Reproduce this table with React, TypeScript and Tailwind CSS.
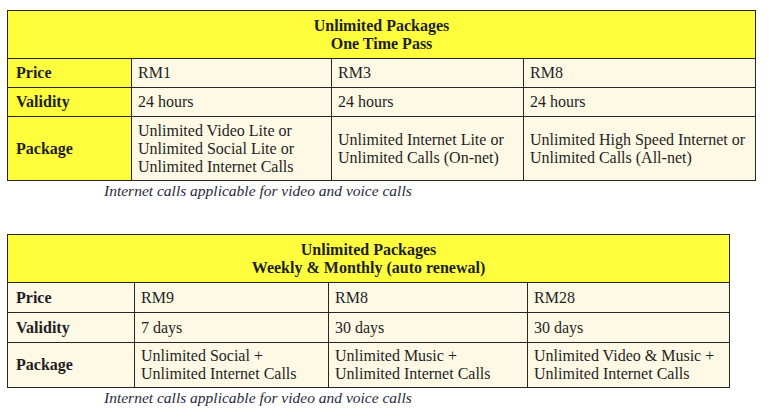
import React from 'react'

type Table = {
  title: string
  subtitle: string
  prices: string[]
  validity: string[]
  packages: string[][]
  cols: string[]
  labelBg: string
  width: string
}

const tables: Table[] = [
  {
    title: 'Unlimited Packages',
    subtitle: 'One Time Pass',
    prices: ['RM1', 'RM3', 'RM8'],
    validity: ['24 hours', '24 hours', '24 hours'],
    packages: [
      ['Unlimited Video Lite or', 'Unlimited Social Lite or', 'Unlimited Internet Calls'],
      ['Unlimited Internet Lite or', 'Unlimited Calls (On-net)'],
      ['Unlimited High Speed Internet or', 'Unlimited Calls (All-net)'],
    ],
    cols: ['w-[124px]', 'w-[200px]', 'w-[192px]', 'w-[232px]'],
    labelBg: 'bg-[#fffe3c]',
    width: 'w-[748px]',
  },
  {
    title: 'Unlimited Packages',
    subtitle: 'Weekly & Monthly (auto renewal)',
    prices: ['RM9', 'RM8', 'RM28'],
    validity: ['7 days', '30 days', '30 days'],
    packages: [
      ['Unlimited Social +', 'Unlimited Internet Calls'],
      ['Unlimited Music +', 'Unlimited Internet Calls'],
      ['Unlimited Video & Music +', 'Unlimited Internet Calls'],
    ],
    cols: ['w-[127px]', 'w-[194px]', 'w-[199px]', 'w-[202px]'],
    labelBg: 'bg-[#fef9e4]',
    width: 'w-[722px]',
  },
]

const cell = 'border-[1.5px] border-[#262626] px-[6px] text-left align-middle'

const PackageTable = ({ t, headerH, rowH, pkgH }: { t: Table; headerH: string; rowH: string; pkgH: string }) => (
  <table className={`${t.width} table-fixed border-collapse`}>
    <colgroup>
      {t.cols.map((c, i) => (
        <col key={i} className={c} />
      ))}
    </colgroup>
    <tbody>
      <tr className={headerH}>
        <td colSpan={4} className="border-[1.5px] border-[#262626] bg-[#fffe3c] text-center font-bold leading-[18px]">
          <div>{t.title}</div>
          <div>{t.subtitle}</div>
        </td>
      </tr>
      <tr className={rowH}>
        <td className={`${cell} ${t.labelBg} pl-[8px] font-bold`}>Price</td>
        {t.prices.map((p, i) => (
          <td key={i} className={`${cell} bg-[#fef9e4]`}>{p}</td>
        ))}
      </tr>
      <tr className={rowH}>
        <td className={`${cell} ${t.labelBg} pl-[8px] font-bold`}>Validity</td>
        {t.validity.map((p, i) => (
          <td key={i} className={`${cell} bg-[#fef9e4]`}>{p}</td>
        ))}
      </tr>
      <tr className={pkgH}>
        <td className={`${cell} ${t.labelBg} pl-[8px] font-bold`}>Package</td>
        {t.packages.map((lines, i) => (
          <td key={i} className={`${cell} bg-[#fef9e4] leading-[18px]`}>
            {lines.map((l, j) => (
              <div key={j}>{l}</div>
            ))}
          </td>
        ))}
      </tr>
    </tbody>
  </table>
)

const Caption = () => (
  <p className="pl-[97px] text-[15.5px] italic leading-[18px] text-[#2a2a3a]">
    Internet calls applicable for video and voice calls
  </p>
)

export default function App() {
  return (
    <div
      className="w-[770px] h-[419px] bg-white pl-[7px] pt-[10px] text-[16px] text-[#1e1e24]"
      style={{ fontFamily: '"Liberation Serif", "DejaVu Serif", serif' }}
    >
      <PackageTable t={tables[0]} headerH="h-[48px]" rowH="h-[29px]" pkgH="h-[64px]" />
      <div className="mt-[1px]">
        <Caption />
      </div>
      <div className="mt-[34px]">
        <PackageTable t={tables[1]} headerH="h-[48px]" rowH="h-[30px]" pkgH="h-[45px]" />
      </div>
      <div className="mt-[1px]">
        <Caption />
      </div>
    </div>
  )
}
